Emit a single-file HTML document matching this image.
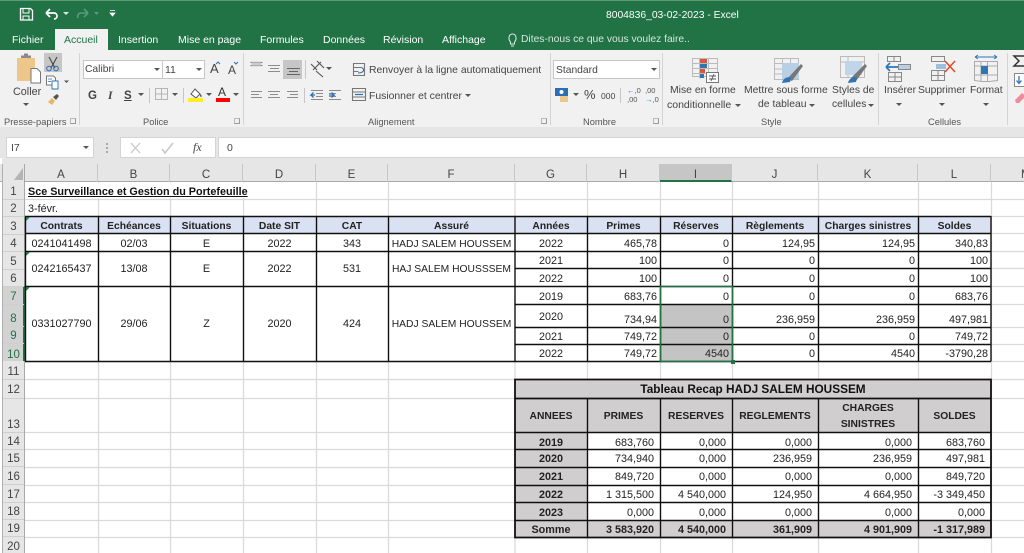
<!DOCTYPE html>
<html lang="fr"><head><meta charset="utf-8"><title>Excel</title>
<style>
html,body{margin:0;padding:0;width:1024px;height:553px;overflow:hidden;background:#fff}
body{position:relative;font-family:"Liberation Sans",sans-serif;color:#262626}
div{box-sizing:border-box}
.a,.t{position:absolute;white-space:nowrap}
.t{font-size:10.5px;line-height:14px;color:#444}
.w{color:#fff}
.g{font-size:9.3px;color:#555;text-align:center}
.r{position:absolute;left:0;width:1024px}
.r div{position:absolute;top:0;height:100%;white-space:nowrap;font-size:10.8px;color:#222;display:flex;align-items:flex-end;justify-content:center;padding-bottom:0;line-height:13px}
.A{left:25px;width:73px}.B{left:98px;width:72px}.C{left:170px;width:73px}.D{left:243px;width:73px}.E{left:316px;width:72px}.F{left:388px;width:127px}
.G{left:515px;width:72px}.H{left:587px;width:73px}.I{left:660px;width:72px}.J{left:732px;width:86px}.K{left:818px;width:100px}.L{left:918px;width:73px}
.r .n{justify-content:flex-end;padding-right:3px}
.r .m{justify-content:flex-end;padding-right:6px}
.b div{font-weight:bold;font-size:10.3px;align-items:center;padding-top:2px}
.mid div{align-items:center;padding-top:2px}
.hd{position:absolute;left:3px;width:21px;text-align:center;font-size:11.500px;color:#444;display:flex;align-items:center;justify-content:center;padding-top:2px;border-bottom:1px solid #cfcfcf}
.ch{position:absolute;top:164px;height:18px;text-align:center;font-size:11.500px;line-height:22px;color:#444;border-right:1px solid #c6c6c6}
.arr{position:absolute;width:0;height:0;border-left:3px solid transparent;border-right:3px solid transparent;border-top:3px solid #555}
.box{position:absolute;background:#fff;border:1px solid #c6c6c6}
.sep{position:absolute;top:53px;height:72px;width:1px;background:#d4d4d4}
.tb{position:absolute;top:88px;height:15px;width:1px;background:#c6c6c6}
.lnc{position:absolute;top:118px;width:6px;height:6px;border:1px solid #999;border-top-color:#bbb;border-left-color:#bbb}
svg{position:absolute;overflow:visible}
</style></head><body>

<!-- title bar -->
<div class="a" style="left:0;top:0;width:1024px;height:50px;background:#217346"></div>
<div class="a" style="left:0;top:0;width:1024px;height:1px;background:#5a9a76"></div>
<svg style="left:0;top:0" width="130" height="28" fill="none">
<path d="M20.500 8.500h10l2 2v9.500h-12z" stroke="#fff" stroke-width="1.300"/>
<path d="M23 9v4h6V9M23 20v-4h6v4" stroke="#fff"/>
<path d="M46 13l4-4M46 13l4 4M46 13h8c4 0 4 6 0 6" stroke="#fff" stroke-width="1.700"/>
<path d="M63 12h6l-3 3z" fill="#d8e8de"/>
<path d="M88 13l-4-4M88 13l-4 4M88 13h-7c-3 0-4 3-3 5" stroke="#5b9a77" stroke-width="1.600"/>
<path d="M94 12h5l-2.500 3z" fill="#5b9a77"/>
<path d="M110 10.500h5M110 13h5l-2.500 3z" stroke="#fff" fill="#fff" stroke-width=".8"/>
</svg>
<div class="t w" style="left:606px;top:9px;font-size:10.3px">8004836_03-02-2023 - Excel</div>

<!-- tabs -->
<div class="a" style="left:55px;top:29px;width:53px;height:22px;background:#f1f1f1"></div>
<div class="t w" style="left:12px;top:33px">Fichier</div>
<div class="t" style="left:64px;top:33px;color:#217346">Accueil</div>
<div class="t w" style="left:118px;top:33px">Insertion</div>
<div class="t w" style="left:178px;top:33px">Mise en page</div>
<div class="t w" style="left:260px;top:33px">Formules</div>
<div class="t w" style="left:323px;top:33px">Données</div>
<div class="t w" style="left:383px;top:33px">Révision</div>
<div class="t w" style="left:442px;top:33px">Affichage</div>
<svg style="left:507px;top:33px" width="12" height="14" fill="none"><path d="M3.500 9C1 6.500 1.500 1 5.500 1s4.500 5.500 2 8v2h-4zM4 13h3" stroke="#dcebe2"/></svg>
<div class="t" style="left:521px;top:33px;color:#d5e6dc;font-size:10.3px">Dites-nous ce que vous voulez faire..</div>

<!-- ribbon -->
<div class="a" style="left:0;top:50px;width:1024px;height:77px;background:#f1f1f1"></div>
<div class="a" style="left:0;top:127px;width:1024px;height:37px;background:#e6e6e6"></div>
<div class="sep" style="left:79px"></div><div class="sep" style="left:243px"></div><div class="sep" style="left:550px"></div><div class="sep" style="left:662px"></div><div class="sep" style="left:878px"></div><div class="sep" style="left:1007px"></div>

<!-- clipboard -->
<div class="a" style="left:44px;top:53px;width:18px;height:19px;background:#c6c6c6"></div>
<svg style="left:0;top:50px" width="80" height="60" fill="none">
<rect x="17" y="8" width="18" height="23" fill="#edc68a"/>
<path d="M21 8V5.500h3V3.500h4v2h3V8z" fill="#8a8a8a"/>
<path d="M31 18.500h6l3.500 3.500v11H31z" fill="#fff" stroke="#777"/>
<path d="M49 7l6 11M57 7l-6 11" stroke="#444" stroke-width="1.100"/>
<circle cx="49" cy="18.500" r="2.300" stroke="#2a6fb5"/><circle cx="56" cy="18.500" r="2.300" stroke="#2a6fb5"/>
<path d="M46.500 26h7l2 2v7h-9z" fill="#fff" stroke="#777"/>
<path d="M52 31h6v8h-6z" fill="#fff" stroke="#2a6fb5" stroke-width=".9"/>
<path d="M48 29h4M48 31.500h3" stroke="#2a6fb5" stroke-width=".8"/>
<path d="M64 30.500h5l-2.500 2.500z" fill="#555"/>
<path d="M48 52l4-4 3 3-3 4z" fill="#e9b764"/><path d="M53 47l4-3 2 2-3 4z" fill="#555"/>
</svg>
<div class="t" style="left:13px;top:85px;font-size:10.800px">Coller</div>
<div class="arr" style="left:23px;top:103px"></div>
<div class="t g" style="left:4px;top:115px">Presse-papiers</div>
<div class="lnc" style="left:70px"></div>

<!-- font -->
<div class="box" style="left:83px;top:60px;width:80px;height:19px"></div>
<div class="box" style="left:162px;top:60px;width:43px;height:19px"></div>
<div class="t" style="left:85px;top:63px;font-size:10.300px">Calibri</div>
<div class="t" style="left:165px;top:63px;font-size:10.500px">11</div>
<div class="arr" style="left:154px;top:68px"></div><div class="arr" style="left:196px;top:68px"></div>
<div class="t" style="left:210px;top:62px;font-size:13px">A</div>
<div class="t" style="left:228px;top:63px;font-size:12px">A</div>
<svg style="left:0;top:50px" width="250" height="60" fill="none"><path d="M216 14l2-2 2 2" stroke="#2a6fb5"/><path d="M234 12l2 2 2-2" stroke="#2a6fb5"/></svg>
<div class="t" style="left:88px;top:89px;font-weight:bold;font-size:11.500px">G</div>
<div class="t" style="left:108px;top:89px;font-weight:bold;font-style:italic;font-size:11.500px;font-family:'Liberation Serif',serif">I</div>
<div class="t" style="left:124px;top:89px;font-weight:bold;font-size:11.500px;text-decoration:underline">S</div>
<div class="arr" style="left:138px;top:93px"></div>
<div class="tb" style="left:149px"></div>
<svg style="left:155px;top:88px" width="14" height="13" fill="none"><path d="M.5.500h12v11H.5zM6.500.5v11M.5 6h12" stroke="#b5b5b5"/></svg>
<div class="arr" style="left:172px;top:93px"></div>
<div class="tb" style="left:183px"></div>
<svg style="left:188px;top:86px" width="16" height="17" fill="none"><path d="M3 8l4-5 5 5-4 4z" fill="#fff" stroke="#555"/><path d="M12 8c2 1 2 3 1 3s-1-2-1-3z" fill="#555"/><rect y="12" width="15" height="4" fill="#ffef20"/></svg>
<div class="arr" style="left:206px;top:93px"></div>
<div class="t" style="left:218px;top:85px;font-size:12px;color:#333">A</div>
<div class="a" style="left:216px;top:98px;width:14px;height:4px;background:#f00"></div>
<div class="arr" style="left:233px;top:93px"></div>
<div class="t g" style="left:143px;top:115px">Police</div>
<div class="lnc" style="left:234px"></div>

<!-- alignment -->
<div class="a" style="left:283px;top:60px;width:19px;height:19px;background:#c6c6c6"></div>
<svg style="left:240px;top:50px" width="125" height="60" fill="none" stroke="#8c8c8c" stroke-width="1.100">
<path d="M10.500 12.500h12M10.500 15.500h12" stroke-width="1.300"/><path d="M12 14h9" stroke="#ccc" stroke-width="3"/>
<path d="M28 15.500h12M30 18.500h9M28 21.500h12"/>
<path d="M47 18.500h13M49 21.500h9M47 24.500h13" stroke="#666"/>
<path d="M73 20l8-8M77 11l7 7M71 14l6 6" stroke="#555"/><path d="M76 21l7 6" stroke="#555"/>
<path d="M11 41.500h11M11 44.500h8M11 47.500h11M28 41.500h12M30 44.500h8M28 47.500h12M47 41.500h11M50 44.500h8M47 47.500h11"/>
<path d="M71 40.500h12M76 43.500h7M76 46.500h7M71 49.500h12"/>
<path d="M89 40.500h12M89 43.500h7M89 46.500h7M89 49.500h12"/>
<path d="M75 45h-4l2.500-2.500M71 45l2.500 2.500M89 45h5l-2.500-2.500M94 45l-2.500 2.500" stroke="#2a6fb5" stroke-width="1.300"/>
<path d="M113.500 13.500h11v12h-11zM113.500 17.500h9M113.500 21.500h5" stroke="#777"/><path d="M118 23c6 0 7-4 4-5" stroke="#2a6fb5"/>
<path d="M112.500 38.500h13v12h-13zM112.500 42h13M112.500 47h13" stroke="#777"/><path d="M115 44.500h8" stroke="#2a6fb5" stroke-width="1.200"/>
</svg>
<div class="arr" style="left:326px;top:67px"></div>
<div class="tb" style="left:304px"></div>
<div class="tb" style="left:305px;top:60px;height:19px"></div>
<div class="t" style="left:369px;top:64px;font-size:10.400px">Renvoyer à la ligne automatiquement</div>
<div class="t" style="left:369px;top:90px;font-size:10.400px">Fusionner et centrer</div>
<div class="arr" style="left:465px;top:94px"></div>
<div class="t g" style="left:368px;top:115px">Alignement</div>
<div class="lnc" style="left:541px"></div>

<!-- number -->
<div class="box" style="left:553px;top:60px;width:107px;height:19px"></div>
<div class="t" style="left:556px;top:64px;font-size:10.300px">Standard</div>
<div class="arr" style="left:651px;top:68px"></div>
<svg style="left:554px;top:87px" width="17" height="16" fill="none"><rect x="1" y="1" width="13" height="8" fill="#2a6fb5"/><circle cx="7.500" cy="5" r="2" fill="#fff"/><rect x="6" y="9" width="8" height="6" fill="#edc68a"/></svg>
<div class="arr" style="left:573px;top:93px"></div>
<div class="t" style="left:584px;top:88px;font-size:13px">%</div>
<div class="t" style="left:601px;top:89px;font-size:8.500px">000</div>
<div class="tb" style="left:620px"></div>
<div class="t" style="left:627px;top:86px;font-size:7.500px;line-height:9px;color:#555"><span style="color:#2a6fb5">←</span>,0<br>,00</div>
<div class="t" style="left:645px;top:86px;font-size:7.500px;line-height:9px;color:#555">,00<br><span style="color:#2a6fb5">→</span>,0</div>
<div class="t g" style="left:583px;top:115px">Nombre</div>
<div class="lnc" style="left:653px"></div>

<!-- styles -->
<svg style="left:680px;top:50px" width="200" height="36" fill="none">
<path d="M12.500 8.500h25v18h-25zM12.500 13.500h25M12.500 18.500h25M12.500 23.500h25M19.500 8.500v20M28.500 8.500v18" stroke="#bbb"/>
<rect x="20" y="9" width="7" height="4" fill="#d9553b"/><rect x="20" y="14" width="7" height="4" fill="#2f75b5"/><rect x="20" y="19" width="5" height="4" fill="#d9553b"/><rect x="20" y="24" width="4" height="4" fill="#2f75b5"/>
<rect x="26.500" y="22.500" width="12" height="10" fill="#fff" stroke="#777"/>
<path d="M29 26h7M29 29h7M34 24l-3 7" stroke="#555" stroke-width=".9"/>
<path d="M94.500 8.500h24v21h-24zM94.500 13.500h24M94.500 19h24M94.500 24h24M102.500 8.500v21M110.500 8.500v21" stroke="#bbb"/>
<rect x="102" y="13" width="17" height="16" fill="#b9cfe6"/>
<path d="M107 29l14-15 2 2-11 15z" fill="#777"/><path d="M102 33c1-5 6-7 9-5l-1 4z" fill="#2f75b5"/>
<path d="M160.500 6.500h24v21h-24zM160.500 12h24M168 6.500v21" stroke="#bbb"/>
<rect x="165" y="11" width="17" height="14" fill="#c0d5ea"/>
<path d="M171 28l14-14 2 2-11 15z" fill="#777"/><path d="M168 33c1-5 6-7 9-5l-1 4z" fill="#2f75b5"/>
</svg>
<div class="t" style="left:670px;top:84px;font-size:10.400px">Mise en forme</div>
<div class="t" style="left:667px;top:98px;font-size:10.500px">conditionnelle</div>
<div class="arr" style="left:735px;top:104px"></div>
<div class="t" style="left:744px;top:84px;font-size:10.400px">Mettre sous forme</div>
<div class="t" style="left:758px;top:98px;font-size:10.400px">de tableau</div>
<div class="arr" style="left:809px;top:104px"></div>
<div class="t" style="left:832px;top:84px;font-size:10.300px">Styles de</div>
<div class="t" style="left:832px;top:98px;font-size:10.300px">cellules</div>
<div class="arr" style="left:868px;top:104px"></div>
<div class="t g" style="left:761px;top:115px">Style</div>

<!-- cells -->
<svg style="left:880px;top:50px" width="144" height="58" fill="none">
<path d="M7.500 6.500h13v5h-13zM14 6.500v5M8.500 22.500h13v9h-13zM8.500 27h13M15 22.500v9" stroke="#888"/>
<rect x="18.500" y="14.500" width="12" height="5" fill="#b9cfe6" stroke="#888"/>
<path d="M6 17h12M6 17l4-4M6 17l4 4" stroke="#2f75b5" stroke-width="1.700"/>
<path d="M51.500 6.500h13v5h-13zM51.500 20.500h13v10h-13zM51.500 25.500h13M58 20.500v10" stroke="#888"/>
<rect x="56" y="14" width="10" height="5" fill="#9dbddc"/>
<path d="M65 11l10 11M75 11L65 22" stroke="#e0492a" stroke-width="1.500"/>
<path d="M94.500 11.500h23v19l-8 1h-8l-7-1zM94.500 16h23M94.500 25h23M101 11.500v20M107.500 11.500v20" stroke="#aaa"/>
<rect x="101" y="16" width="7" height="8" fill="#2f75b5"/>
<path d="M95 7h22M95 7l3-2M95 7l3 2M117 7l-3-2M117 7l-3 2" stroke="#2f75b5"/>
<path d="M144 6h-10l5 5-5 5h10" stroke="#333" stroke-width="1.500"/>
<path d="M134.500 23.500h10v13h-10z" fill="#fff" stroke="#888"/>
<path d="M139 26v7M136.500 30.500l2.500 3 2.500-3" stroke="#2f75b5" stroke-width="1.300"/>
<path d="M135 50l7-7 4 3-7 7h-3z" fill="#ef8b9c"/>
</svg>
<div class="t" style="left:884px;top:84px;font-size:10.300px">Insérer</div>
<div class="t" style="left:918px;top:84px;font-size:10.300px">Supprimer</div>
<div class="t" style="left:970px;top:84px;font-size:10.300px">Format</div>
<div class="arr" style="left:896px;top:103px"></div><div class="arr" style="left:939px;top:103px"></div><div class="arr" style="left:983px;top:103px"></div>
<div class="t g" style="left:928px;top:115px">Cellules</div>

<!-- formula bar -->
<div class="box" style="left:6px;top:137px;width:88px;height:21px;border-color:#d4d4d4"></div>
<div class="t" style="left:11px;top:141px;font-size:10.500px">I7</div>
<div class="arr" style="left:83px;top:146px"></div>
<svg style="left:105px;top:142px" width="4" height="12"><path d="M1 1h2v2H1zM1 5h2v2H1zM1 9h2v2H1z" fill="#aaa"/></svg>
<div class="box" style="left:120px;top:137px;width:96px;height:21px;border-color:#d4d4d4"></div>
<svg style="left:128px;top:141px" width="50" height="14" fill="none"><path d="M3 2l9 10M12 2L3 12" stroke="#c8c8c8" stroke-width="1.300"/><path d="M34 8l3 4 8-10" stroke="#c8c8c8" stroke-width="1.600"/></svg>
<div class="t" style="left:193px;top:140px;font-size:12px;font-style:italic;font-family:'Liberation Serif',serif;color:#444">fx</div>
<div class="box" style="left:218px;top:137px;width:806px;height:21px;border-color:#d4d4d4;border-right:0"></div>
<div class="t" style="left:227px;top:141px;font-size:10.500px">0</div>

<!-- sheet headers -->
<div class="a" style="left:0;top:158px;width:2px;height:395px;background:#fff"></div>
<div class="a" style="left:0;top:164px;width:1024px;height:18px;background:#e6e6e6;border-bottom:1px solid #a9a9a9"></div>
<div class="a" style="left:2px;top:164px;width:23px;height:389px;background:#e6e6e6;border-right:1px solid #a9a9a9;border-left:1px solid #b0b0b0"></div>
<svg style="left:13px;top:167px" width="12" height="14"><path d="M10 1v12H1z" fill="#b4b4b4"/></svg>
<div class="ch A">A</div><div class="ch B">B</div><div class="ch C">C</div><div class="ch D">D</div><div class="ch E">E</div><div class="ch F">F</div><div class="ch G">G</div><div class="ch H">H</div>
<div class="ch I" style="background:#c6c6c6;height:18px;border-bottom:2px solid #217346">I</div>
<div class="ch J">J</div><div class="ch K">K</div><div class="ch L">L</div>
<div class="ch" style="left:1021px;width:20px;border:0;text-align:left">M</div>

<div class="a" style="left:3px;top:286px;width:22px;height:75px;background:#d2d2d2;border-right:2px solid #217346"></div>
<div class="hd" style="top:182px;height:18px">1</div>
<div class="hd" style="top:200px;height:17px">2</div>
<div class="hd" style="top:217px;height:18px">3</div>
<div class="hd" style="top:235px;height:17px">4</div>
<div class="hd" style="top:252px;height:18px">5</div>
<div class="hd" style="top:270px;height:17px">6</div>
<div class="hd" style="top:287px;height:18px;color:#217346">7</div>
<div class="hd" style="top:304px;height:23px;padding-top:7px;color:#217346">8</div>
<div class="hd" style="top:327px;height:17px;color:#217346">9</div>
<div class="hd" style="top:345px;height:17px;color:#217346;border:0">10</div>
<div class="hd" style="top:362px;height:18px">11</div>
<div class="hd" style="top:380px;height:19px">12</div>
<div class="hd" style="top:399px;height:34px;padding-top:18px">13</div>
<div class="hd" style="top:433px;height:17px">14</div>
<div class="hd" style="top:449px;height:18px">15</div>
<div class="hd" style="top:467px;height:18px">16</div>
<div class="hd" style="top:485px;height:18px">17</div>
<div class="hd" style="top:503px;height:17px">18</div>
<div class="hd" style="top:520px;height:17px">19</div>
<div class="hd" style="top:538px;height:15px;border:0">20</div>

<!-- gridlines + fills + borders -->
<svg style="left:0;top:0" width="1024" height="553" fill="none">
<path stroke="#dadada" stroke-width="1.300" d="M98.500 182V553M170.500 182V553M243.500 182V553M316.500 182V553M388.500 182V553M515 182V553M587.500 182V553M660.500 182V553M732.500 182V553M818.500 182V553M918.500 182V553M991.500 182V553
M25 199.500H1024M25 216.500H1024M25 233.500H1024M25 251.500H1024M25 268.500H1024M25 286.500H1024M25 304.500H1024M25 327.500H1024M25 344.500H1024M25 361.500H1024M25 379.500H1024M25 398.500H1024M25 432.500H1024M25 449.500H1024M25 467.500H1024M25 485.500H1024M25 502.500H1024M25 520.500H1024M25 537.500H1024"/>
<path stroke="#fff" stroke-width="2" d="M98.500 183V198M170.500 183V198M243.500 183V198"/>
<rect x="25" y="216" width="966" height="145" fill="#fff"/>
<rect x="25" y="216" width="966" height="17" fill="#d9e1f2"/>
<rect x="660" y="304" width="72" height="57" fill="#c4c4c4"/>
<rect x="515" y="379" width="476" height="158" fill="#fff"/>
<rect x="515" y="379" width="476" height="53" fill="#d0cece"/>
<rect x="515" y="432" width="72" height="105" fill="#d0cece"/>
<rect x="515" y="520" width="476" height="17" fill="#d0cece"/>
<path stroke="#111" stroke-width="1.400" d="M25.500 216.500V361.500M98.500 216V361.500M170.500 216V361.500M243.500 216V361.500M316.500 216V361.500M388.500 216V361.500M515 216V361.500M587.500 216V361.500M660.500 216V361.500M732.500 216V361.500M818.500 216V361.500M918.500 216V361.500M991 216V361.500
M25 216.500H991M25 233.500H991M25 251.500H991M515 268.500H991M25 286.500H991M515 304.500H991M515 327.500H991M515 344.500H991M25 361.500H991"/>
<path stroke="#111" stroke-width="1.400" d="M587.500 398V537M660.500 398V537M732.500 398V537M818.500 398V537M918.500 398V537M515 432.500H991M515 449.500H991M515 467.500H991M515 485.500H991M515 502.500H991M515 520.500H991"/>
<path stroke="#111" stroke-width="1.800" d="M515 379.500H991V537.500H515ZM515 398.500H991"/>
<path stroke="#217346" stroke-width="1.600" d="M660.500 286.500H732.500V361.500H660.500Z"/>
<rect x="731" y="360" width="4" height="4" fill="#217346"/>
<path fill="#217346" d="M26 217h4l-4 4zM26 252h4l-4 4zM26 287h4l-4 4z"/>
</svg>

<!-- cell text -->
<div class="a" style="left:28px;top:186px;font-size:10.800px;font-weight:bold;line-height:13px;color:#111;text-decoration:underline">Sce Surveillance et Gestion du Portefeuille</div>
<div class="a" style="left:28px;top:203px;font-size:10.800px;line-height:13px;color:#222">3-févr.</div>

<div class="r b" style="top:216px;height:18px"><div class="A">Contrats</div><div class="B">Echéances</div><div class="C">Situations</div><div class="D">Date SIT</div><div class="E">CAT</div><div class="F">Assuré</div><div class="G">Années</div><div class="H">Primes</div><div class="I">Réserves</div><div class="J">Règlements</div><div class="K">Charges sinistres</div><div class="L">Soldes</div></div>
<div class="r" style="top:233px;height:18px"><div class="A">0241041498</div><div class="B">02/03</div><div class="C">E</div><div class="D">2022</div><div class="E">343</div><div class="F" style="font-size:10.300px">HADJ SALEM HOUSSEM</div><div class="G">2022</div><div class="H n">465,78</div><div class="I n">0</div><div class="J n">124,95</div><div class="K n">124,95</div><div class="L n">340,83</div></div>
<div class="r mid" style="top:251px;height:35px"><div class="A">0242165437</div><div class="B">13/08</div><div class="C">E</div><div class="D">2022</div><div class="E">531</div><div class="F" style="font-size:10.300px">HAJ SALEM HOUSSSEM</div></div>
<div class="r" style="top:250px;height:18px"><div class="G">2021</div><div class="H n">100</div><div class="I n">0</div><div class="J n">0</div><div class="K n">0</div><div class="L n">100</div></div>
<div class="r" style="top:268px;height:18px"><div class="G">2022</div><div class="H n">100</div><div class="I n">0</div><div class="J n">0</div><div class="K n">0</div><div class="L n">100</div></div>
<div class="r mid" style="top:286px;height:75px"><div class="A">0331027790</div><div class="B">29/06</div><div class="C">Z</div><div class="D">2020</div><div class="E">424</div><div class="F" style="font-size:10.300px">HADJ SALEM HOUSSEM</div></div>
<div class="r" style="top:286px;height:18px"><div class="G">2019</div><div class="H n">683,76</div><div class="I n">0</div><div class="J n">0</div><div class="K n">0</div><div class="L n">683,76</div></div>
<div class="r" style="top:304px;height:23px"><div class="G" style="padding-bottom:3px">2020</div><div class="H n">734,94</div><div class="I n">0</div><div class="J n">236,959</div><div class="K n">236,959</div><div class="L n">497,981</div></div>
<div class="r" style="top:326px;height:18px"><div class="G">2021</div><div class="H n">749,72</div><div class="I n">0</div><div class="J n">0</div><div class="K n">0</div><div class="L n">749,72</div></div>
<div class="r" style="top:343px;height:18px"><div class="G">2022</div><div class="H n">749,72</div><div class="I n">4540</div><div class="J n">0</div><div class="K n">4540</div><div class="L n">-3790,28</div></div>

<div class="r b" style="top:379px;height:18px"><div style="left:515px;width:476px;font-size:11.800px;color:#111">Tableau Recap HADJ SALEM HOUSSEM</div></div>
<div class="r b" style="top:398px;height:34px"><div class="G">ANNEES</div><div class="H">PRIMES</div><div class="I">RESERVES</div><div class="J">REGLEMENTS</div><div class="K" style="white-space:normal;text-align:center;line-height:16px;padding:3px 14px 0">CHARGES SINISTRES</div><div class="L">SOLDES</div></div>
<div class="r" style="top:432px;height:18px"><div class="G" style="font-weight:bold">2019</div><div class="H m">683,760</div><div class="I m">0,000</div><div class="J m">0,000</div><div class="K m">0,000</div><div class="L m">683,760</div></div>
<div class="r" style="top:448px;height:18px"><div class="G" style="font-weight:bold">2020</div><div class="H m">734,940</div><div class="I m">0,000</div><div class="J m">236,959</div><div class="K m">236,959</div><div class="L m">497,981</div></div>
<div class="r" style="top:466px;height:18px"><div class="G" style="font-weight:bold">2021</div><div class="H m">849,720</div><div class="I m">0,000</div><div class="J m">0,000</div><div class="K m">0,000</div><div class="L m">849,720</div></div>
<div class="r" style="top:484px;height:18px"><div class="G" style="font-weight:bold">2022</div><div class="H m">1 315,500</div><div class="I m">4 540,000</div><div class="J m">124,950</div><div class="K m">4 664,950</div><div class="L m">-3 349,450</div></div>
<div class="r" style="top:502px;height:18px"><div class="G" style="font-weight:bold">2023</div><div class="H m">0,000</div><div class="I m">0,000</div><div class="J m">0,000</div><div class="K m">0,000</div><div class="L m">0,000</div></div>
<div class="r" style="top:519px;height:18px"><div class="G" style="font-weight:bold">Somme</div><div class="H m" style="font-weight:bold">3 583,920</div><div class="I m" style="font-weight:bold">4 540,000</div><div class="J m" style="font-weight:bold">361,909</div><div class="K m" style="font-weight:bold">4 901,909</div><div class="L m" style="font-weight:bold">-1 317,989</div></div>

</body></html>
